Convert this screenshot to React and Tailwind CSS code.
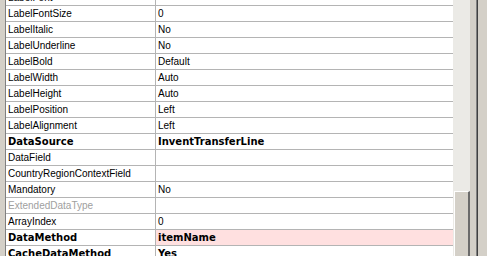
import React from "react";

const rows = [
  { name: "LabelFont", value: "" },
  { name: "LabelFontSize", value: "0" },
  { name: "LabelItalic", value: "No" },
  { name: "LabelUnderline", value: "No" },
  { name: "LabelBold", value: "Default" },
  { name: "LabelWidth", value: "Auto" },
  { name: "LabelHeight", value: "Auto" },
  { name: "LabelPosition", value: "Left" },
  { name: "LabelAlignment", value: "Left" },
  { name: "DataSource", value: "InventTransferLine", bold: true },
  { name: "DataField", value: "" },
  { name: "CountryRegionContextField", value: "" },
  { name: "Mandatory", value: "No" },
  { name: "ExtendedDataType", value: "", disabled: true },
  { name: "ArrayIndex", value: "0" },
  { name: "DataMethod", value: "itemName", bold: true, highlight: true },
  { name: "CacheDataMethod", value: "Yes", bold: true },
];

const PropRow = ({ data }) => {
  const font = data.bold
    ? "font-['DejaVu_Sans',sans-serif] font-bold text-[10px]"
    : "font-['Liberation_Sans',Arial,sans-serif] text-[10px]";
  const color = data.disabled ? "text-[#a0a0a0]" : "text-black";

  return (
    <div className="flex h-[16px] shrink-0 border-b border-[#b4b4b4] bg-white">
      <div className={`w-[150px] shrink-0 flex items-center pl-[2px] border-r border-[#b4b4b4] ${font} ${color} whitespace-nowrap overflow-hidden`}>
        {data.name}
      </div>
      <div
        className={`flex-1 flex items-center pl-[2px] ${font} text-black whitespace-nowrap overflow-hidden ${
          data.highlight ? "bg-[#ffe0e0]" : "bg-white"
        }`}
      >
        {data.value}
      </div>
    </div>
  );
};

export default function App() {
  return (
    <div className="flex w-[487px] h-[256px] overflow-hidden bg-[#d4d0c8]">
      {/* left frame */}
      <div className="w-[6px] shrink-0 bg-[#d4d0c8] border-r border-[#808080]" />

      {/* property grid */}
      <div className="w-[447px] shrink-0 flex flex-col bg-white -mt-[10px]">
        {rows.map((item, i) => (
          <PropRow key={i} data={item} />
        ))}
      </div>

      {/* vertical scrollbar */}
      <div className="w-[17px] shrink-0 flex flex-col bg-[#ebeae6]">
        <div className="h-[191px] shrink-0" />
        <div className="flex-1 ml-[1px] bg-[#d4d0c8] border-l border-t border-white border-r-2 border-r-[#6b6b6b]" />
      </div>

      {/* right frame */}
      <div className="w-[17px] shrink-0 flex bg-[#d4d0c8]">
        <div className="w-[6px] shrink-0" />
        <div className="w-[1px] shrink-0 bg-[#808080]" />
        <div className="w-[1px] shrink-0 bg-[#404040]" />
        <div className="flex-1" />
      </div>
    </div>
  );
}
